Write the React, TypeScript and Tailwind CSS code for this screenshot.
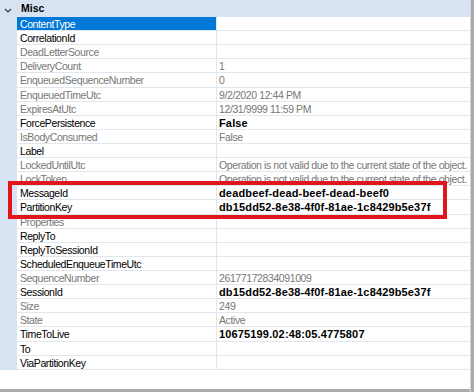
import React from 'react';

type Prop = {
  name: string;
  value?: string;
  disabled?: boolean;
  bold?: boolean;
  selected?: boolean;
};

const GUID = 'db15dd52-8e38-4f0f-81ae-1c8429b5e37f';
const INVALID = 'Operation is not valid due to the current state of the object.';

const PROPS: Prop[] = [
  { name: 'ContentType', selected: true },
  { name: 'CorrelationId' },
  { name: 'DeadLetterSource', disabled: true },
  { name: 'DeliveryCount', value: '1', disabled: true },
  { name: 'EnqueuedSequenceNumber', value: '0', disabled: true },
  { name: 'EnqueuedTimeUtc', value: '9/2/2020 12:44 PM', disabled: true },
  { name: 'ExpiresAtUtc', value: '12/31/9999 11:59 PM', disabled: true },
  { name: 'ForcePersistence', value: 'False', bold: true },
  { name: 'IsBodyConsumed', value: 'False', disabled: true },
  { name: 'Label' },
  { name: 'LockedUntilUtc', value: INVALID, disabled: true },
  { name: 'LockToken', value: INVALID, disabled: true },
  { name: 'MessageId', value: 'deadbeef-dead-beef-dead-beef0', bold: true },
  { name: 'PartitionKey', value: GUID, bold: true },
  { name: 'Properties', disabled: true },
  { name: 'ReplyTo' },
  { name: 'ReplyToSessionId' },
  { name: 'ScheduledEnqueueTimeUtc' },
  { name: 'SequenceNumber', value: '26177172834091009', disabled: true },
  { name: 'SessionId', value: GUID, bold: true },
  { name: 'Size', value: '249', disabled: true },
  { name: 'State', value: 'Active', disabled: true },
  { name: 'TimeToLive', value: '10675199.02:48:05.4775807', bold: true },
  { name: 'To' },
  { name: 'ViaPartitionKey' },
];

export default function App() {
  return (
    <div
      className="relative flex w-[474px] h-[392px] bg-white overflow-hidden"
      style={{ fontFamily: '"Liberation Sans", Arial, sans-serif' }}
    >
      <div className="flex flex-col w-[470px] h-full">
        {/* category header */}
        <div className="flex items-center h-[17px] bg-[#d7e3f1] shrink-0">
          <svg width="17" height="17" viewBox="0 0 17 17" className="shrink-0">
            <polyline points="5,9 8,12 11,9" fill="none" stroke="#3c3c3c" strokeWidth="1.2" />
          </svg>
          <span className="pl-[4px] text-[10.5px] font-bold text-black leading-[17px]">Misc</span>
        </div>

        {PROPS.map((p) => (
          <div key={p.name} className="flex h-[14.12px] shrink-0">
            <div className="w-[17px] shrink-0 bg-[#d7e3f1]" />
            <div
              className={`w-[200px] shrink-0 border-b border-r border-[#e1e7ef] pl-[3px] text-[10.5px] tracking-[-0.4px] leading-[14px] whitespace-nowrap overflow-hidden ${
                p.selected ? 'bg-[#0078d7] text-white' : p.disabled ? 'text-[#777777]' : 'text-black'
              }`}
            >
              {p.name}
            </div>
            <div
              className={`flex-1 border-b border-[#e1e7ef] pl-[2px] whitespace-nowrap overflow-hidden leading-[14px] ${
                p.bold
                  ? 'text-[11px] font-bold tracking-[0.15px] text-black'
                  : 'text-[10.5px] tracking-[-0.4px] text-[#777777]'
              }`}
            >
              {p.value ?? ''}
            </div>
          </div>
        ))}

        <div className="flex-1" />
        <div className="h-[3px] bg-[#ababab] shrink-0" />
      </div>

      {/* right window border */}
      <div className="w-[4px] h-full flex shrink-0">
        <div className="w-[1px] bg-[#d4d4d4]" />
        <div className="flex-1 bg-[#a9a9a9]" />
      </div>

      {/* highlight annotation */}
      <div className="absolute left-[8px] top-[181px] w-[439px] h-[38px] border-[4px] border-[#e3151c]" />
    </div>
  );
}
